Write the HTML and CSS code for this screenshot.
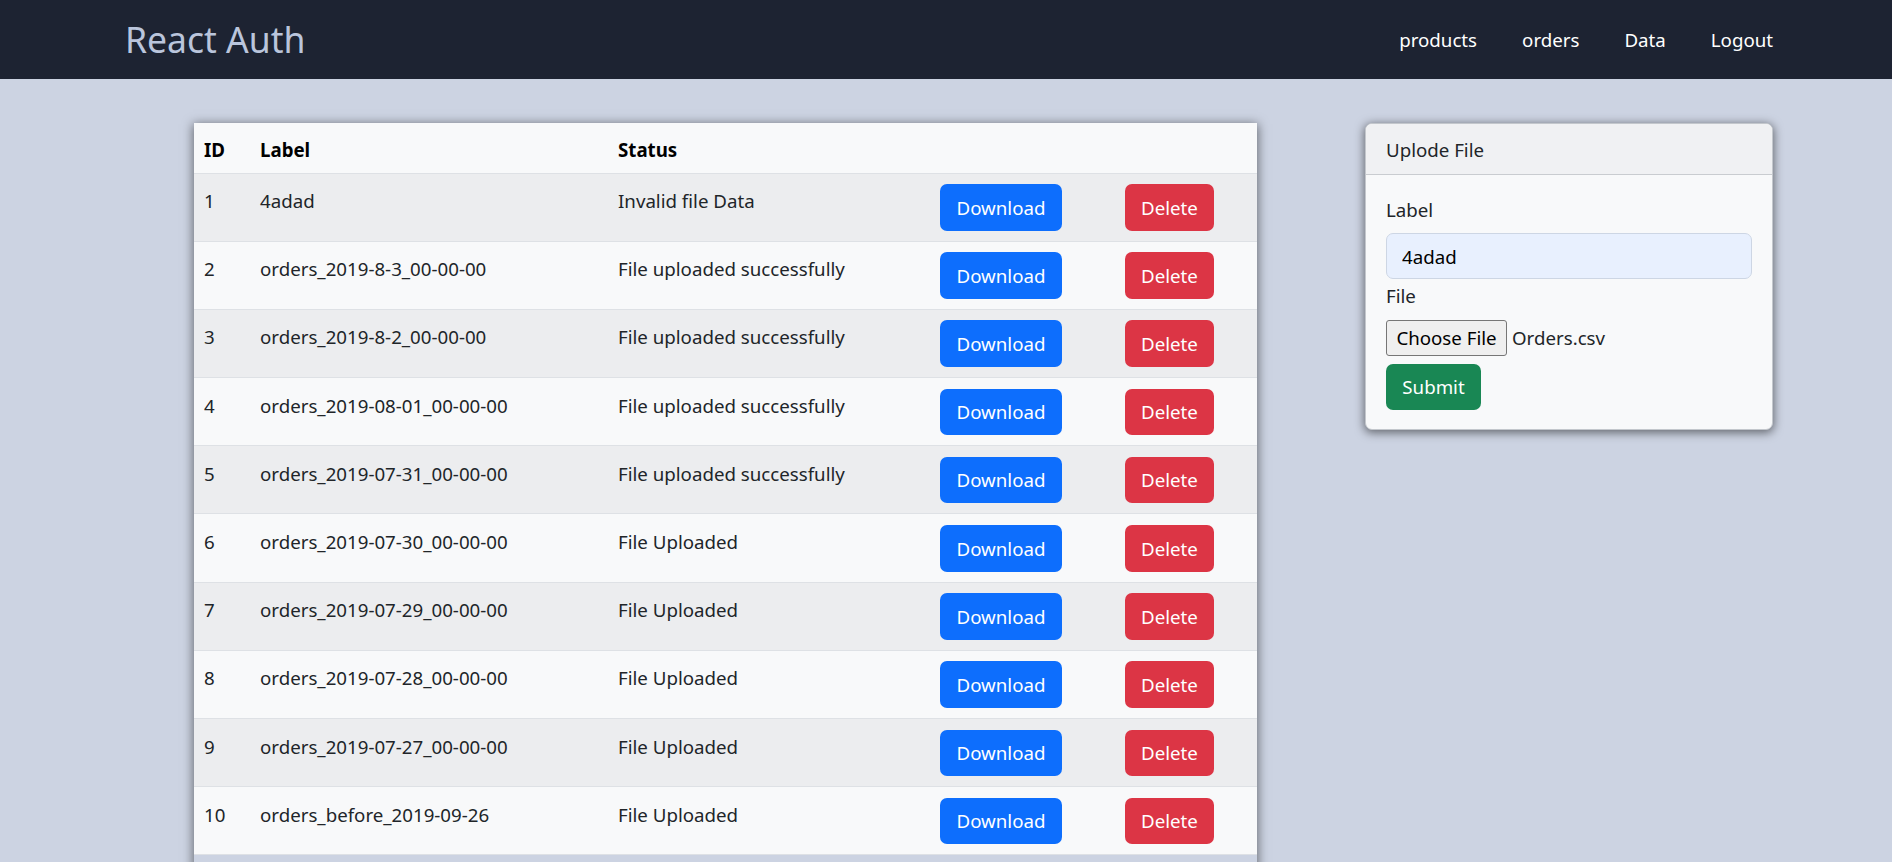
FILE: index.html
```html
<!DOCTYPE html>
<html>
<head>
    <title>React Auth</title>
    <link rel="stylesheet" href="styles.css">
</head>
<body>
    <nav class="navbar">
        <a class="brand" href="#">React Auth</a>
        <ul class="nav-links">
            <li><a href="#">products</a></li>
            <li><a href="#">orders</a></li>
            <li><a href="#">Data</a></li>
            <li><a href="#">Logout</a></li>
        </ul>
    </nav>

    <div class="main">
        <div class="table-wrap">
            <table class="files">
                <thead>
                    <tr>
                        <th class="col-id">ID</th>
                        <th class="col-label">Label</th>
                        <th class="col-status">Status</th>
                        <th class="col-dl"></th>
                        <th class="col-del"></th>
                    </tr>
                </thead>
                <tbody>
                    <tr>
                        <td>1</td>
                        <td>4adad</td>
                        <td>Invalid file Data</td>
                        <td><button class="btn btn-blue">Download</button></td>
                        <td><button class="btn btn-red">Delete</button></td>
                    </tr>
                    <tr>
                        <td>2</td>
                        <td>orders_2019-8-3_00-00-00</td>
                        <td>File uploaded successfully</td>
                        <td><button class="btn btn-blue">Download</button></td>
                        <td><button class="btn btn-red">Delete</button></td>
                    </tr>
                    <tr>
                        <td>3</td>
                        <td>orders_2019-8-2_00-00-00</td>
                        <td>File uploaded successfully</td>
                        <td><button class="btn btn-blue">Download</button></td>
                        <td><button class="btn btn-red">Delete</button></td>
                    </tr>
                    <tr>
                        <td>4</td>
                        <td>orders_2019-08-01_00-00-00</td>
                        <td>File uploaded successfully</td>
                        <td><button class="btn btn-blue">Download</button></td>
                        <td><button class="btn btn-red">Delete</button></td>
                    </tr>
                    <tr>
                        <td>5</td>
                        <td>orders_2019-07-31_00-00-00</td>
                        <td>File uploaded successfully</td>
                        <td><button class="btn btn-blue">Download</button></td>
                        <td><button class="btn btn-red">Delete</button></td>
                    </tr>
                    <tr>
                        <td>6</td>
                        <td>orders_2019-07-30_00-00-00</td>
                        <td>File Uploaded</td>
                        <td><button class="btn btn-blue">Download</button></td>
                        <td><button class="btn btn-red">Delete</button></td>
                    </tr>
                    <tr>
                        <td>7</td>
                        <td>orders_2019-07-29_00-00-00</td>
                        <td>File Uploaded</td>
                        <td><button class="btn btn-blue">Download</button></td>
                        <td><button class="btn btn-red">Delete</button></td>
                    </tr>
                    <tr>
                        <td>8</td>
                        <td>orders_2019-07-28_00-00-00</td>
                        <td>File Uploaded</td>
                        <td><button class="btn btn-blue">Download</button></td>
                        <td><button class="btn btn-red">Delete</button></td>
                    </tr>
                    <tr>
                        <td>9</td>
                        <td>orders_2019-07-27_00-00-00</td>
                        <td>File Uploaded</td>
                        <td><button class="btn btn-blue">Download</button></td>
                        <td><button class="btn btn-red">Delete</button></td>
                    </tr>
                    <tr>
                        <td>10</td>
                        <td>orders_before_2019-09-26</td>
                        <td>File Uploaded</td>
                        <td><button class="btn btn-blue">Download</button></td>
                        <td><button class="btn btn-red">Delete</button></td>
                    </tr>
                </tbody>
            </table>
        </div>

        <div class="upload-card">
            <div class="card-header">Uplode File</div>
            <div class="card-body">
                <form id="uploadForm">
                    <label class="lab">Label</label>
                    <input type="text" name="label" class="form-control" value="4adad">
                    <label class="lab">File</label>
                    <div class="file-row">
                        <button type="button" class="file-btn">Choose File</button>
                        <span class="file-name">Orders.csv</span>
                    </div>
                    <button type="button" class="btn btn-green">Submit</button>
                </form>
            </div>
        </div>
    </div>
</body>
</html>
```

FILE: styles.css
```css
body {
    margin: 0;
    font-family: "Noto Sans", sans-serif;
    font-size: 18.7px;
    line-height: 29.5px;
    color: #212529;
    background-color: #ccd3e2;
}
.navbar {
    height: 79px;
    background-color: #1d2332;
    display: flex;
    align-items: center;
    justify-content: space-between;
    padding: 0 119px 0 125px;
}
.brand {
    color: #bac5dc;
    font-size: 35.5px;
    text-decoration: none;
    line-height: 1;
}
.nav-links {
    list-style: none;
    display: flex;
    gap: 45px;
    margin: 0;
    padding: 0;
}
.nav-links a {
    color: #ffffff;
    text-decoration: none;
}
.main {
    display: flex;
    align-items: flex-start;
    padding: 44px 119px 0 194px;
}
.table-wrap {
    width: 1063px;
    padding-bottom: 30px;
    box-shadow: 0 2px 10px 1px rgba(0, 0, 0, 0.5);
}
.files {
    width: 100%;
    border-collapse: collapse;
    table-layout: fixed;
}
.files th,
.files td {
    box-sizing: border-box;
    text-align: left;
    vertical-align: top;
    border-bottom: 1px solid #dee1e5;
}
.files th {
    padding: 11.5px 10px 8.5px;
    font-weight: bold;
    color: #000;
    background-color: #f8f9fa;
}
.files td {
    padding: 10.5px 10px 10px;
    line-height: 33px;
}
.files tbody tr:nth-child(odd) td {
    background-color: #ecedef;
}
.files tbody tr:nth-child(even) td {
    background-color: #f8f9fa;
}
.col-id { width: 56px; }
.col-label { width: 358px; }
.col-status { width: 322px; }
.col-dl { width: 185px; }
.col-del { width: 142px; }
.btn {
    font-family: inherit;
    font-size: 18.7px;
    line-height: 29.5px;
    color: #fff;
    border: 1px solid transparent;
    border-radius: 7px;
    padding: 7.6px 0;
    text-align: center;
    cursor: pointer;
    display: block;
}
.btn-blue {
    background-color: #0d6efd;
    width: 122px;
}
.btn-red {
    background-color: #dc3545;
    width: 89px;
}
.btn-green {
    background-color: #198754;
    width: 95px;
    margin-top: 8px;
}
.upload-card {
    margin-left: auto;
    width: 408px;
    box-sizing: border-box;
    background-color: #f8f9fa;
    border: 1px solid #c3c7cc;
    border-radius: 7px;
    box-shadow: 0 2px 10px 1px rgba(0, 0, 0, 0.5);
    overflow: hidden;
}
.card-header {
    background-color: #f0f1f3;
    border-bottom: 1px solid #c9ccd0;
    padding: 11px 20px 9px;
}
.card-body {
    padding: 20px 20px 19px;
}
.lab {
    display: block;
    margin-bottom: 9px;
}
.form-control {
    display: block;
    width: 100%;
    box-sizing: border-box;
    height: 46px;
    padding: 7px 15px;
    font-family: inherit;
    font-size: 18.7px;
    color: #000;
    background-color: #e8f0fe;
    border: 1px solid #cdd6e4;
    border-radius: 7px;
}
.form-control + .lab {
    margin-top: 2px;
}
.file-row {
    display: flex;
    align-items: center;
    gap: 5px;
}
.file-btn {
    font-family: inherit;
    font-size: 18.7px;
    height: 36px;
    width: 121px;
    padding: 0;
    color: #000;
    background-color: #efefef;
    border: 1px solid #767676;
    border-radius: 3px;
}
.file-name {
    color: #212529;
}
```
